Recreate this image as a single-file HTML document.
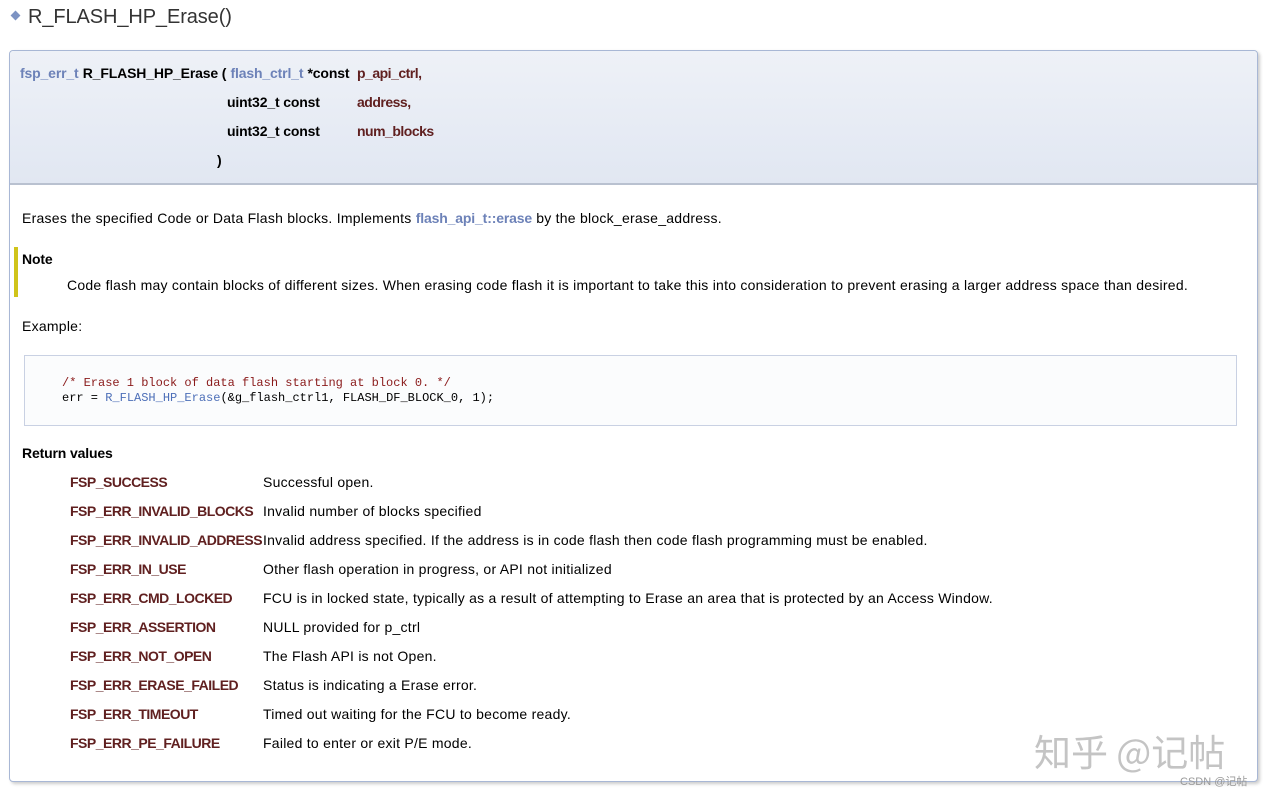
<!DOCTYPE html>
<html><head><meta charset="utf-8"><style>
body{margin:0;background:#fff;width:1263px;height:796px;overflow:hidden;font-family:"Liberation Sans",sans-serif;font-size:14px;color:#000;position:relative;letter-spacing:0.25px}
.a{position:absolute;white-space:nowrap}
.blue{color:#6d82b8}
.red{color:#602020;font-weight:bold;letter-spacing:-0.5px}
b{font-weight:bold;letter-spacing:-0.15px}
.box{position:absolute;left:9px;top:50px;width:1247px;height:730px;border:1px solid #a8b7d5;border-radius:4px;box-shadow:2px 2px 3px #ccc;background:#fff}
.hd{position:absolute;left:0;top:0;width:1247px;height:132px;background:linear-gradient(#eef1f7,#e1e7f2);border-bottom:2px solid #b9c1d0;border-radius:4px 4px 0 0}
.code{position:absolute;left:24px;top:355px;width:1211px;height:69px;border:1px solid #c9d1e3;background:#fbfcfd;font-family:"Liberation Mono",monospace;font-size:12px;letter-spacing:0}
.sq{display:inline-block;width:7px;height:7px;background:#7d93c3;transform:rotate(45deg);margin-right:9px;vertical-align:4px}
</style></head><body>
<div class="a" style="left:12px;top:6px;font-size:20px;color:#333;letter-spacing:-0.1px"><span class="sq"></span>R_FLASH_HP_Erase()</div>
<div class="box"><div class="hd"></div></div>
<div class="a" style="left:20px;top:65px"><b class="blue">fsp_err_t</b> <b>R_FLASH_HP_Erase (</b> <b class="blue">flash_ctrl_t</b> <b>*const</b></div>
<div class="a red" style="left:357px;top:65px">p_api_ctrl,</div>
<div class="a" style="left:227px;top:94px"><b>uint32_t const</b></div>
<div class="a red" style="left:357px;top:94px">address,</div>
<div class="a" style="left:227px;top:123px"><b>uint32_t const</b></div>
<div class="a red" style="left:357px;top:123px">num_blocks</div>
<div class="a" style="left:217px;top:152px"><b>)</b></div>
<div class="a" style="left:22px;top:210px">Erases the specified Code or Data Flash blocks. Implements <b class="blue">flash_api_t::erase</b> by the block_erase_address.</div>
<div class="a" style="left:14px;top:247px;width:4px;height:50px;background:#d0c41a"></div>
<div class="a" style="left:22px;top:251px"><b>Note</b></div>
<div class="a" style="left:67px;top:277px">Code flash may contain blocks of different sizes. When erasing code flash it is important to take this into consideration to prevent erasing a larger address space than desired.</div>
<div class="a" style="left:22px;top:318px">Example:</div>
<div class="code"><div class="a" style="left:37px;top:20px;color:#8a1a1a">/* Erase 1 block of data flash starting at block 0. */</div><div class="a" style="left:37px;top:35px">err = <span style="color:#4d6fb8">R_FLASH_HP_Erase</span>(&amp;g_flash_ctrl1, FLASH_DF_BLOCK_0, 1);</div></div>
<div class="a" style="left:22px;top:445px"><b>Return values</b></div>
<div class="a red" style="left:70px;top:474px">FSP_SUCCESS</div><div class="a" style="left:263px;top:474px">Successful open.</div>
<div class="a red" style="left:70px;top:503px">FSP_ERR_INVALID_BLOCKS</div><div class="a" style="left:263px;top:503px">Invalid number of blocks specified</div>
<div class="a red" style="left:70px;top:532px">FSP_ERR_INVALID_ADDRESS</div><div class="a" style="left:263px;top:532px">Invalid address specified. If the address is in code flash then code flash programming must be enabled.</div>
<div class="a red" style="left:70px;top:561px">FSP_ERR_IN_USE</div><div class="a" style="left:263px;top:561px">Other flash operation in progress, or API not initialized</div>
<div class="a red" style="left:70px;top:590px">FSP_ERR_CMD_LOCKED</div><div class="a" style="left:263px;top:590px">FCU is in locked state, typically as a result of attempting to Erase an area that is protected by an Access Window.</div>
<div class="a red" style="left:70px;top:619px">FSP_ERR_ASSERTION</div><div class="a" style="left:263px;top:619px">NULL provided for p_ctrl</div>
<div class="a red" style="left:70px;top:648px">FSP_ERR_NOT_OPEN</div><div class="a" style="left:263px;top:648px">The Flash API is not Open.</div>
<div class="a red" style="left:70px;top:677px">FSP_ERR_ERASE_FAILED</div><div class="a" style="left:263px;top:677px">Status is indicating a Erase error.</div>
<div class="a red" style="left:70px;top:706px">FSP_ERR_TIMEOUT</div><div class="a" style="left:263px;top:706px">Timed out waiting for the FCU to become ready.</div>
<div class="a red" style="left:70px;top:735px">FSP_ERR_PE_FAILURE</div><div class="a" style="left:263px;top:735px">Failed to enter or exit P/E mode.</div>
<div class="a" style="left:1034px;top:723px;font-size:37px;color:#c4c4c4;letter-spacing:0;font-family:'Noto Sans CJK SC',sans-serif">知乎 @记帖</div>
<div class="a" style="left:1180px;top:773px;font-size:11px;color:#999;letter-spacing:0;font-family:'Liberation Sans','Noto Sans CJK SC',sans-serif">CSDN @记帖</div>
</body></html>
